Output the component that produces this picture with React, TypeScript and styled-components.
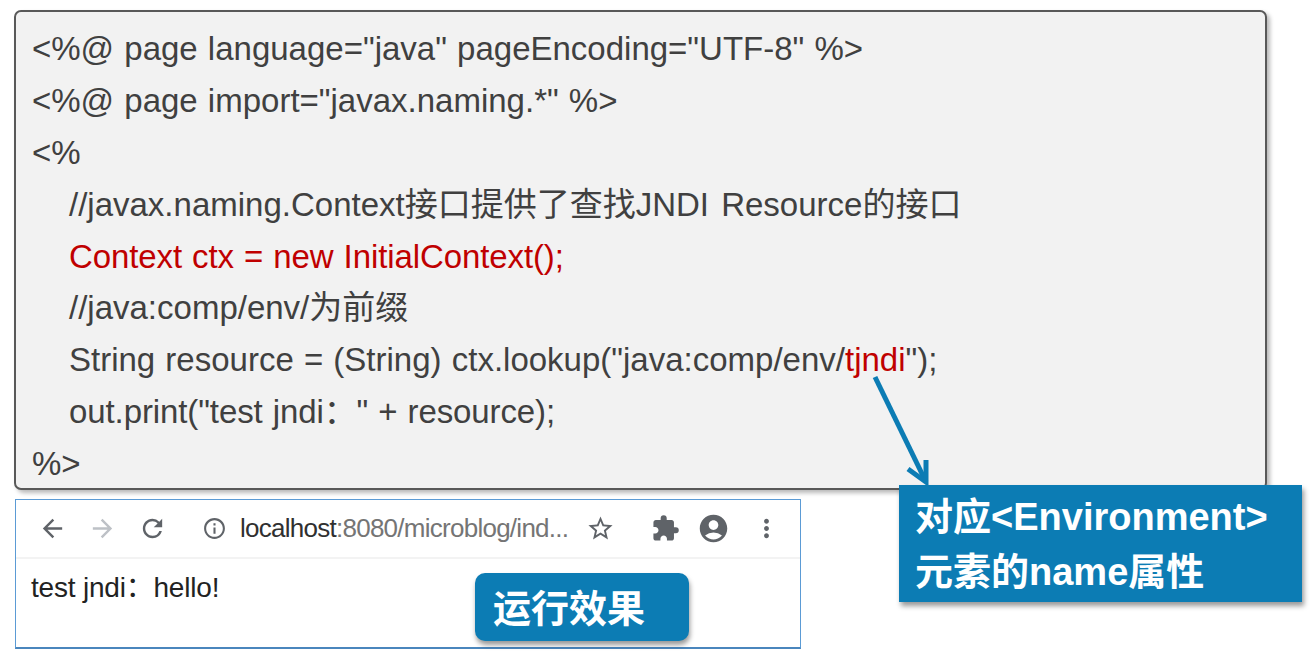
import React from 'react';
import styled, { createGlobalStyle } from 'styled-components';
import { MdArrowBack, MdArrowForward, MdRefresh, MdInfoOutline, MdStarBorder, MdExtension, MdAccountCircle, MdMoreVert } from 'react-icons/md';

const GlobalStyle = createGlobalStyle`
  html, body {
    margin: 0;
    padding: 0;
    background: #fff;
    overflow: hidden;
  }
`;

const Page = styled.div`
  position: relative;
  width: 1311px;
  height: 668px;
  padding: 10px 0 0 14px;
  box-sizing: border-box;
  font-family: "Liberation Sans", "Noto Sans CJK SC", sans-serif;
`;

// Code panel
const CodePanel = styled.div`
  width: 1253px;
  height: 480px;
  box-sizing: border-box;
  padding: 11px 0 0 16px;
  background: #f2f2f2;
  border: 2px solid #595959;
  border-radius: 7px;
  box-shadow: 3px 3px 4px rgba(0, 0, 0, 0.28);
`;

const CodeLine = styled.div<{ $indent?: boolean; $red?: boolean; $wordGap?: number; $tracking?: number }>`
  height: 51.9px;
  line-height: 51.9px;
  font-size: 33px;
  word-spacing: ${(p) => p.$wordGap ?? 1}px;
  letter-spacing: ${(p) => p.$tracking ?? 0}px;
  white-space: pre;
  color: ${(p) => (p.$red ? '#c00000' : '#404040')};
  padding-left: ${(p) => (p.$indent ? '37px' : '0')};
`;

const Red = styled.span`
  color: #c00000;
`;

// Browser screenshot
const BrowserShot = styled.div`
  width: 786px;
  height: 150px;
  margin: 9px 0 0 1px;
  box-sizing: border-box;
  border: 1px solid #5b9bd5;
  border-bottom: 2px solid #4a86bd;
  background: #fff;
`;

const Toolbar = styled.div`
  height: 57px;
  display: flex;
  align-items: center;
  padding: 0 0 0 22px;
  border-bottom: 2px solid #f3f3f3;
  color: #5f6368;
`;

const NavIcon = styled.span<{ $faded?: boolean; $gap?: number; $size?: number }>`
  display: flex;
  flex: none;
  font-size: ${(p) => p.$size ?? 29}px;
  margin-right: ${(p) => p.$gap ?? 0}px;
  color: ${(p) => (p.$faded ? '#bdc1c6' : '#5f6368')};
`;

const Url = styled.span`
  flex: none;
  width: 328px;
  margin-right: 18px;
  font-size: 26px;
  letter-spacing: -0.74px;
  white-space: nowrap;
  color: #757575;
`;

const Host = styled.span`
  color: #303030;
`;

const BrowserBody = styled.div`
  padding: 13px 0 0 15px;
  font-size: 28px;
  line-height: 32px;
  letter-spacing: -0.2px;
  color: #222;
`;

// Callouts lying over the content
const BlueNote = styled.div`
  position: absolute;
  left: 899px;
  top: 485px;
  width: 403px;
  height: 117px;
  box-sizing: border-box;
  padding: 5px 0 0 16px;
  background: #0c7cb4;
  color: #fff;
  font-size: 38px;
  font-weight: 700;
  line-height: 55px;
  white-space: pre;
  box-shadow: 2px 4px 5px rgba(0, 0, 0, 0.4);
`;

const BlueLabel = styled.div`
  position: absolute;
  left: 475px;
  top: 573px;
  width: 214px;
  height: 68px;
  box-sizing: border-box;
  padding: 10px 0 0 18px;
  background: #0c7cb4;
  border-radius: 10px;
  color: #fff;
  font-size: 38px;
  font-weight: 700;
  line-height: 52px;
  box-shadow: 1px 4px 5px rgba(0, 0, 0, 0.4);
`;

const Arrow = styled.svg`
  position: absolute;
  left: 865px;
  top: 370px;
  width: 70px;
  height: 116px;
`;

export default function App() {
  return (
    <Page>
      <GlobalStyle />
      <CodePanel>
        <CodeLine>{'<%@ page language="java" pageEncoding="UTF-8" %>'}</CodeLine>
        <CodeLine>{'<%@ page import="javax.naming.*" %>'}</CodeLine>
        <CodeLine>{'<%'}</CodeLine>
        <CodeLine $indent $wordGap={3}>{'//javax.naming.Context接口提供了查找JNDI Resource的接口'}</CodeLine>
        <CodeLine $indent $red $tracking={-0.1}>{'Context ctx = new InitialContext();'}</CodeLine>
        <CodeLine $indent>{'//java:comp/env/为前缀'}</CodeLine>
        <CodeLine $indent>
          {'String resource = (String) ctx.lookup("java:comp/env/'}
          <Red>tjndi</Red>
          {'");'}
        </CodeLine>
        <CodeLine $indent $tracking={-0.1}>{'out.print("test jndi：" + resource);'}</CodeLine>
        <CodeLine>{'%>'}</CodeLine>
      </CodePanel>
      <BrowserShot>
        <Toolbar>
          <NavIcon $gap={21}><MdArrowBack /></NavIcon>
          <NavIcon $faded $gap={21}><MdArrowForward /></NavIcon>
          <NavIcon $gap={35}><MdRefresh /></NavIcon>
          <NavIcon $size={25} $gap={13}><MdInfoOutline /></NavIcon>
          <Url><Host>localhost</Host>:8080/microblog/ind...</Url>
          <NavIcon $gap={36}><MdStarBorder /></NavIcon>
          <NavIcon $gap={17}><MdExtension /></NavIcon>
          <NavIcon $size={33} $gap={22}><MdAccountCircle /></NavIcon>
          <NavIcon><MdMoreVert /></NavIcon>
        </Toolbar>
        <BrowserBody>test jndi：hello!</BrowserBody>
      </BrowserShot>
      <Arrow viewBox="0 0 70 116" fill="none" stroke="#0c7cb4" strokeWidth="5">
        <path d="M10 7 L61 112" />
        <path d="M43 99 L61 112 L61 90" />
      </Arrow>
      <BlueNote>{'对应<Environment>\n元素的name属性'}</BlueNote>
      <BlueLabel>运行效果</BlueLabel>
    </Page>
  );
}
